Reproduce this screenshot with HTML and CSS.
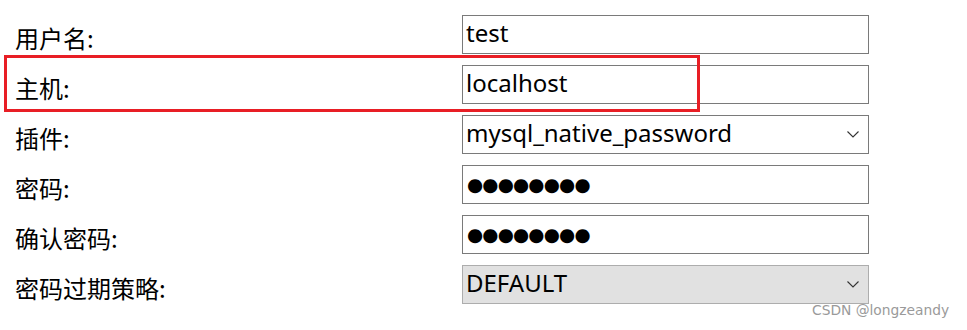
FILE: index.html
```html
<!DOCTYPE html>
<html lang="zh-CN">
<head>
<meta charset="utf-8">
<title>用户</title>
<link rel="stylesheet" href="styles.css">
</head>
<body>
<div class="form">
  <div class="row">
    <div class="label">用户名:</div>
    <div class="field"><span class="value">test</span></div>
  </div>
  <div class="row">
    <div class="label">主机:</div>
    <div class="field"><span class="value">localhost</span></div>
  </div>
  <div class="row">
    <div class="label">插件:</div>
    <div class="field select"><span class="value">mysql_native_password</span>
      <svg class="chev" width="12" height="7" viewBox="0 0 12 7"><polyline points="0.5,0.5 6,6 11.5,0.5" fill="none" stroke="#333" stroke-width="1.1"/></svg>
    </div>
  </div>
  <div class="row">
    <div class="label">密码:</div>
    <div class="field"><span class="dots">●●●●●●●●</span></div>
  </div>
  <div class="row">
    <div class="label">确认密码:</div>
    <div class="field"><span class="dots">●●●●●●●●</span></div>
  </div>
  <div class="row">
    <div class="label">密码过期策略:</div>
    <div class="field select disabled"><span class="value">DEFAULT</span>
      <svg class="chev" width="12" height="7" viewBox="0 0 12 7"><polyline points="0.5,0.5 6,6 11.5,0.5" fill="none" stroke="#333" stroke-width="1.1"/></svg>
    </div>
  </div>
  <div class="highlight"></div>
</div>
<div class="watermark">CSDN @longzeandy</div>
</body>
</html>
```
FILE: styles.css
```css
html, body {
  margin: 0;
  padding: 0;
  background: #fff;
}
body {
  width: 967px;
  height: 330px;
  position: relative;
  overflow: hidden;
  font-family: "Noto Sans", "Noto Sans CJK SC", sans-serif;
  color: #000;
}
.form {
  position: relative;
  padding: 15px 0 0 15px;
  display: flex;
  flex-direction: column;
  gap: 11px;
}
.row {
  display: grid;
  grid-template-columns: 447px 407px;
  height: 39px;
}
.label {
  font-family: "Noto Sans CJK SC", sans-serif;
  font-size: 24px;
  line-height: 28px;
  padding-top: 9px;
}
.field {
  box-sizing: border-box;
  height: 39px;
  border: 1px solid #7a7a7a;
  background: #fff;
  display: flex;
  align-items: center;
  padding: 0 9px 0 3px;
}
.value {
  font-size: 24px;
  line-height: 30px;
  flex: 1;
  padding-bottom: 3px;
}
.dots {
  font-family: "DejaVu Sans", sans-serif;
  font-size: 18.5px;
  letter-spacing: -0.8px;
  line-height: 30px;
  padding-left: 1px;
}
.chev {
  display: block;
}
.select.disabled {
  background: #e1e1e1;
  border-color: #adadad;
}
.highlight {
  position: absolute;
  left: 4px;
  top: 55px;
  width: 690px;
  height: 51px;
  border: 3px solid #e81e25;
}
.watermark {
  position: absolute;
  left: 812px;
  top: 302px;
  font-family: "DejaVu Sans", sans-serif;
  font-size: 13.8px;
  color: #9a9a9a;
}
```
